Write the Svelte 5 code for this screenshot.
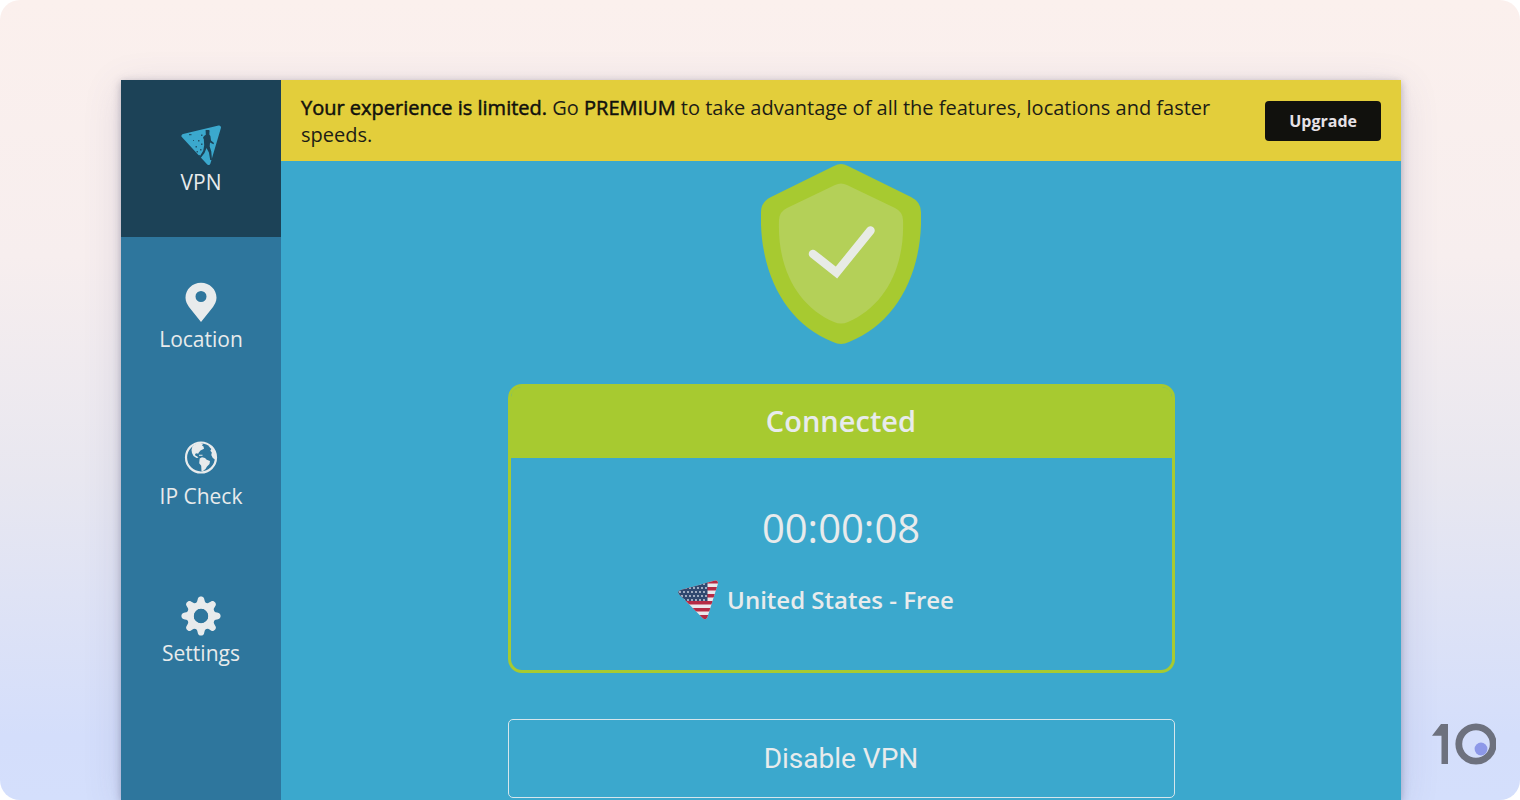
<script>
  const items = [
    { id: 'vpn', label: 'VPN' },
    { id: 'location', label: 'Location' },
    { id: 'ip', label: 'IP Check' },
    { id: 'settings', label: 'Settings' }
  ];
  let active = $state('vpn');

  const stars = [];
  for (let r = 0; r < 5; r++) {
    for (let c = 0; c < 7; c++) stars.push([2 + c * 4 + (r % 2) * 2, 4 + r * 4]);
  }
  const teeth = [0, 45, 90, 135, 180, 225, 270, 315];
</script>

<div class="stage">
  <div class="window">
    <nav class="sidebar" aria-label="Main">
      {#each items as item}
        <button class="item" class:active={active === item.id} onclick={() => (active = item.id)}>
          <svg class="icon" viewBox="0 0 40 40" aria-hidden="true">
            {#if item.id === 'vpn'}
              <path d="M2.500 11 38 2.500 27.500 38Z" fill="#3ba8cd" stroke="#3ba8cd" stroke-width="4" stroke-linejoin="round" />
              <g fill="#1c4257">
                <path d="M24.600 5h3.800v1.500l.4.300-.4.500v2.500l1 1.200.6 4.500 3 2.500-.5 1.200-3.500-1.700-.3 4 1.600 5 .7 8.500h-1.800l-1.300-7.500-2.400-4.500-2 5-3.800 5-1.500-.7 4-6.500 1-5.500-.4-6-.8-1.500 1-1.800 1.800-1.200Z" />
                <path opacity=".8" d="M8 9h2.500v1.300H8zM20 9.500h1.500V11H20zM17 15h1.500v1.500H17zM20 18.500h1.500V20H20zM14.500 21H16v1.500h-1.500zM15.500 26H17v1.500h-1.500zM19 24h1.500v1.500H19zM17.500 30H19v1.500h-1.500zM12 15h1v1h-1z" />
              </g>
            {:else if item.id === 'location'}
              <path fill-rule="evenodd" fill="#e8ebec" d="M20 .8C11.300.8 4.500 7.500 4.500 15.800 4.500 20 6.500 22.500 8 25l12 15 12-15c1.500-2.500 3.500-5 3.500-9.200C35.500 7.500 28.700.8 20 .8Zm0 8.200a5.500 5.500 0 1 1 0 11 5.500 5.500 0 0 1 0-11Z" />
            {:else if item.id === 'ip'}
              <circle cx="20" cy="18.500" r="15" fill="none" stroke="#e8ebec" stroke-width="2.200" />
              <g fill="#e8ebec">
                <path d="m11.500 7 4-2.500 3.500-.7 3 1.200-1 1.500 1.500 1 .5 2.300-3.500 1.700-1.700 2-.6 1.300-1.700-.5-1.500.8.5 1.700 1.500.5 1.500 1.500-2 .2-3-2-1.500-3L10.500 11Z" />
                <path d="M18 15.800h3.500v.9H18ZM18.700 19.500l2.300-1.200 3 .7 1.700 1.700 3.300 1.300-.5 3-2.500 2.500-1.500 2.500-2.500 2-1.500.3-.3-5.500-2-2.600Z" />
                <path d="m27.500 7 2 .5 3 4 1.800 4-.3 5-2.200-1.500-1.500-3 .5-2.500-1.500-1.700 1-1.800Z" />
              </g>
            {:else}
              <g fill="#e8ebec">
                {#each teeth as a}
                  <path transform="rotate({a} 20 20)" d="M14 8C16.500 6.500 16.300 4.500 17 2.300 17.800-.2 22.200-.2 23 2.300 23.700 4.500 23.500 6.500 26 8l-1.500 5h-9Z" />
                {/each}
                <path fill-rule="evenodd" d="M20 6a14 14 0 1 1 0 28 14 14 0 0 1 0-28Zm0 6.800a7.200 7.200 0 1 0 0 14.400 7.200 7.200 0 0 0 0-14.400Z" />
              </g>
              <circle cx="20" cy="20" r="7.200" fill="#2e769d" />
            {/if}
          </svg>
          <span>{item.label}</span>
        </button>
      {/each}
    </nav>

    <div class="content">
      <header class="banner">
        <p><b>Your experience is limited.</b> Go <b>PREMIUM</b> to take advantage of all the features, locations and faster speeds.</p>
        <button class="upgrade">Upgrade</button>
      </header>

      <main>
        <svg class="shield" viewBox="0 0 160 180" aria-hidden="true">
          <path fill="#a7ca30" d="M73 2Q80-2 87 2L150 33Q160 38 160 48C162 108 136 159 88 178Q80 182 72 178C24 159-2 108 0 48Q0 38 10 33Z" />
          <path fill="#b4d058" d="M74 21Q80 18 86 21L134 44Q142 48 142 56C144 106 122 143 87 158Q80 161 73 158C38 143 16 106 18 56Q18 48 26 44Z" />
          <path d="m52 90 23.500 18.500L109.500 66.500" fill="none" stroke="#e8ebe6" stroke-width="8.500" stroke-linecap="round" />
        </svg>

        <section class="card">
          <h1>Connected</h1>
          <div class="status">
            <time class="timer">00:00:08</time>
            <div class="country">
              <svg viewBox="0 0 40 40" aria-hidden="true">
                <defs>
                  <clipPath id="flag"><path d="M1.500 10.500Q-1 12 1 14L25 38.500Q28 40.500 29.500 37L40 3.500Q40 0 37 .5Z" /></clipPath>
                </defs>
                <g clip-path="url(#flag)">
                  <path fill="#ece8ec" d="M0 0h40v40H0z" />
                  <path fill="#b52b45" d="M0 0h40v3.500H0zM0 7h40v3.500H0zM0 14h40v3.500H0zM0 21h40v3.500H0zM0 28h40v3.500H0zM0 35h40v5H0z" />
                  <path fill="#30486f" d="M0 0h29.500v21H0z" />
                  {#each stars as [x, y]}
                    <circle cx={x} cy={y} r="0.9" fill="#d5dce8" />
                  {/each}
                </g>
              </svg>
              <span>United States - Free</span>
            </div>
          </div>
        </section>

        <button class="disable">Disable VPN</button>
      </main>
    </div>
  </div>

  <svg class="brand" viewBox="0 0 64 42" role="img" aria-label="Top 10">
    <path fill="#6d717e" d="M9 1h7v40h-6.500V12.700H0Z" />
    <circle cx="44" cy="21" r="17.200" fill="none" stroke="#6d717e" stroke-width="6.800" />
    <circle cx="49" cy="26" r="6.400" fill="#8d98e8" />
  </svg>
</div>

<style>
  :global(body) {
    margin: 0;
    background: #fff;
  }

  .stage {
    position: relative;
    box-sizing: border-box;
    display: flex;
    min-height: 100vh;
    padding: 80px 119px 0 121px;
    overflow: hidden;
    border-radius: 20px;
    background: linear-gradient(#fbf0ed 0%, #f7eeee 32%, #e8e7f0 60%, #d4defb 92%, #d4dffc 100%);
    font-family: "Open Sans", "Noto Sans", sans-serif;
    color: #e8ebec;
  }

  button {
    font-family: inherit;
    color: inherit;
    cursor: pointer;
  }

  .window {
    flex: 1;
    display: flex;
    min-width: 0;
    background: #3ba8cd;
    box-shadow: 0 2px 8px rgba(60, 60, 90, 0.35), 0 8px 36px rgba(90, 90, 140, 0.16);
  }

  .sidebar {
    flex: 0 0 160px;
    display: flex;
    flex-direction: column;
    background: #2e769d;
  }

  .item {
    display: flex;
    flex-direction: column;
    align-items: center;
    height: 157px;
    padding: 45px 0 0;
    border: 0;
    background: none;
    font-size: 21px;
    line-height: 34px;
  }

  .item.active {
    background: #1c4257;
  }

  .icon {
    width: 40px;
    height: 40px;
    flex: none;
  }

  .content {
    flex: 1;
    min-width: 0;
  }

  .banner {
    box-sizing: border-box;
    display: flex;
    align-items: center;
    gap: 40px;
    min-height: 81px;
    padding: 13px 20px;
    background: #e3ce3b;
    color: #1d1d15;
  }

  .banner p {
    flex: 1;
    margin: 0;
    font-size: 20px;
    line-height: 27px;
  }

  .banner b {
    font-weight: 500;
    color: #11110d;
    -webkit-text-stroke: 0.5px #11110d;
  }

  .upgrade {
    height: 40px;
    padding: 0 24px;
    border: 0;
    border-radius: 4px;
    background: #11110d;
    color: #e6e2e6;
    font-size: 16px;
    font-weight: 700;
  }

  main {
    display: flex;
    flex-direction: column;
    align-items: center;
    padding: 3px 24px 0;
  }

  .shield {
    width: 160px;
    height: 180px;
  }

  .card {
    box-sizing: border-box;
    width: 100%;
    max-width: 667px;
    margin-top: 40px;
    border: 3px solid #a7ca30;
    border-radius: 14px;
  }

  h1 {
    margin: 0;
    padding: 14px 0 17px;
    border-radius: 10px 10px 0 0;
    background: #a7ca30;
    font-size: 29px;
    font-weight: 600;
    line-height: 40px;
    text-align: center;
  }

  .status {
    display: flex;
    flex-direction: column;
    align-items: center;
    gap: 24px;
    padding: 42px 0 50px;
  }

  .timer {
    font-size: 40px;
    line-height: 56px;
  }

  .country {
    display: flex;
    align-items: center;
    gap: 9px;
    margin-right: 50px;
    font-size: 24px;
    font-weight: 600;
    line-height: 40px;
  }

  .country svg {
    width: 40px;
    height: 40px;
  }

  .disable {
    width: 100%;
    max-width: 667px;
    height: 79px;
    margin-top: 46px;
    border: 1px solid #d6e6ec;
    border-radius: 5px;
    background: none;
    font-family: Roboto, sans-serif;
    font-size: 28px;
  }

  .brand {
    position: absolute;
    right: 24px;
    bottom: 35px;
    width: 64px;
    height: 42px;
  }
</style>
